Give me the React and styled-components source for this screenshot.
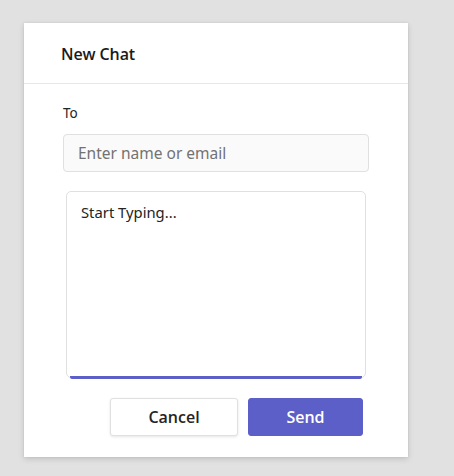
import React from "react";
import styled, { createGlobalStyle } from "styled-components";

const Global = createGlobalStyle`
  html, body { margin: 0; padding: 0; background: #e1e1e1; }
  body { font-family: "Noto Sans", "Open Sans", Arial, sans-serif; width: 454px; height: 476px; overflow: hidden; }
  * { box-sizing: border-box; }
`;

const Page = styled.div`
  padding: 23px 0 0 24px;
`;

const Card = styled.div`
  width: 384px;
  height: 434px;
  background: #ffffff;
  box-shadow: 0 2px 6px rgba(0, 0, 0, 0.14), 0 0 2px rgba(0, 0, 0, 0.08);
  display: flex;
  flex-direction: column;
`;

const Header = styled.div`
  height: 61px;
  border-bottom: 1px solid #e8e8e8;
  display: flex;
  align-items: center;
  padding-left: 37px;
  padding-top: 2px;
`;

const Title = styled.h2`
  margin: 0;
  font-family: "Open Sans", "Noto Sans", Arial, sans-serif;
  font-size: 16px;
  font-weight: 600;
  color: #1a1a1a;
  letter-spacing: -0.1px;
`;

const Body = styled.div`
  padding: 19px 39px 0 39px;
  display: flex;
  flex-direction: column;
`;

const Label = styled.label`
  font-size: 13.5px;
  line-height: 20px;
  color: #242424;
  margin-bottom: 11px;
`;

const TextInput = styled.input`
  height: 38px;
  width: 100%;
  border: 1px solid #e0e0e0;
  border-radius: 4px;
  background: #fafafa;
  padding: 0 14px;
  font-family: inherit;
  font-size: 15.5px;
  color: #242424;
  outline: none;
  &::placeholder { color: #727272; }
`;

const Composer = styled.div`
  position: relative;
  margin: 19px 3px 0 3px;
  height: 187px;
  border: 1px solid #e0e0e0;
  border-radius: 5px;
  background: #fff;
  padding: 10px 14px;
  &::after {
    content: "";
    position: absolute;
    left: 3px;
    right: 3px;
    bottom: -2px;
    height: 3px;
    background: #5b5fc7;
    border-radius: 0 0 2px 2px;
  }
`;

const ComposerText = styled.div`
  font-size: 14.8px;
  line-height: 20px;
  color: #242424;
`;

const Actions = styled.div`
  display: flex;
  justify-content: flex-end;
  gap: 10px;
  margin-top: 20px;
  padding-right: 6px;
`;

const Button = styled.button`
  height: 38px;
  width: ${(p) => p.$w}px;
  font-family: "Open Sans", "Noto Sans", Arial, sans-serif;
  font-size: 16px;
  font-weight: 600;
  border-radius: 3px;
  cursor: pointer;
  border: 1px solid ${(p) => (p.$primary ? "#5b5fc7" : "#e0e0e0")};
  background: ${(p) => (p.$primary ? "#5b5fc7" : "#ffffff")};
  color: ${(p) => (p.$primary ? "#ffffff" : "#242424")};
  box-shadow: ${(p) => (p.$primary ? "none" : "0 1px 3px rgba(0,0,0,0.1)")};
`;

export default function App() {
  return (
    <>
      <Global />
      <Page>
        <Card>
          <Header>
            <Title>New Chat</Title>
          </Header>
          <Body>
            <Label>To</Label>
            <TextInput placeholder="Enter name or email" />
            <Composer>
              <ComposerText>Start Typing...</ComposerText>
            </Composer>
            <Actions>
              <Button $w={128}>Cancel</Button>
              <Button $w={115} $primary>Send</Button>
            </Actions>
          </Body>
        </Card>
      </Page>
    </>
  );
}
